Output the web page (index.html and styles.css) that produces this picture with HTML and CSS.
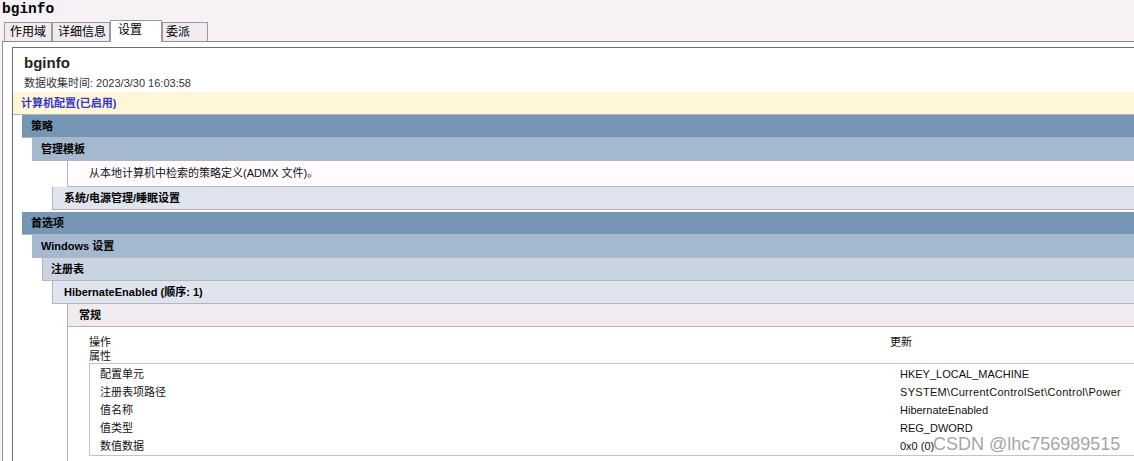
FILE: index.html
```html
<!DOCTYPE html>
<html lang="zh-CN">
<head>
<meta charset="utf-8">
<title>bginfo</title>
<link rel="stylesheet" href="styles.css">
</head>
<body>
<div class="page">
  <div class="apptitle">bginfo</div>
  <div class="tabs">
    <div class="tab t1">作用域</div>
    <div class="tab t2">详细信息</div>
    <div class="tab t3 active">设置</div>
    <div class="tab t4">委派</div>
  </div>
  <div class="tabpanel">
    <div class="report">
      <div class="rhead">
        <div class="rtitle">bginfo</div>
        <div class="rtime">数据收集时间: 2023/3/30 16:03:58</div>
      </div>
      <div class="cat">计算机配置(已启用)</div>

      <div class="sec i1">
        <div class="bar b1">策略</div>
        <div class="sec i2">
          <div class="bar b2">管理模板</div>
          <div class="desc">从本地计算机中检索的策略定义(ADMX 文件)。</div>
          <div class="sec i4">
            <div class="bar b4">系统/电源管理/睡眠设置</div>
          </div>
        </div>
      </div>

      <div class="sec i1 pref">
        <div class="bar b1">首选项</div>
        <div class="sec i2">
          <div class="bar b2">Windows 设置</div>
          <div class="sec i2">
            <div class="bar b3">注册表</div>
            <div class="sec i2">
              <div class="bar b4">HibernateEnabled (顺序: 1)</div>
              <div class="sec i5">
                <div class="bar b5">常规</div>
                <div class="details">
                  <div class="kv"><span>操作</span><span>更新</span></div>
                  <div class="ptitle">属性</div>
                  <div class="props">
                    <div class="prow"><span>配置单元</span><span>HKEY_LOCAL_MACHINE</span></div>
                    <div class="prow"><span>注册表项路径</span><span class="wide">SYSTEM\CurrentControlSet\Control\Power</span></div>
                    <div class="prow"><span>值名称</span><span>HibernateEnabled</span></div>
                    <div class="prow"><span>值类型</span><span>REG_DWORD</span></div>
                    <div class="prow"><span>数值数据</span><span>0x0 (0)</span></div>
                  </div>
                </div>
              </div>
            </div>
          </div>
        </div>
      </div>
    </div>
  </div>
  <div class="wm">CSDN @lhc756989515</div>
</div>
</body>
</html>
```

FILE: styles.css
```css
html, body {
  margin: 0;
  padding: 0;
}
body {
  background: #f5f1f5;
  font-family: "Liberation Sans", "Noto Sans CJK SC", sans-serif;
  font-size: 11px;
  color: #111;
  overflow: hidden;
}
.page {
  position: relative;
  height: 461px;
  display: flex;
  flex-direction: column;
}
.apptitle {
  font-family: "Liberation Mono", monospace;
  font-weight: bold;
  font-size: 14.5px;
  line-height: 19px;
  height: 20px;
  padding-left: 2px;
  color: #000;
}
.tabs {
  position: relative;
  z-index: 1;
  display: flex;
  align-items: flex-end;
  height: 21px;
  padding-left: 4px;
  font-size: 12px;
  color: #000;
}
.tab {
  box-sizing: border-box;
  height: 19px;
  line-height: 18px;
  border: 1px solid #9a9a9a;
  border-bottom: none;
  background: #efebef;
  white-space: nowrap;
}
.t1 { padding: 0 5px; }
.t2 { padding: 0 3px 0 5px; }
.t3 { padding: 0 19px 0 7px; }
.t4 { padding: 0 17px 0 3px; }
.tab.active {
  height: 22px;
  margin-bottom: -1px;
  line-height: 18px;
  background: #fff;
}
.tabpanel {
  flex: 1;
  min-height: 0;
  margin-left: 2px;
  border-top: 1px solid #8e8e8e;
  border-left: 1px solid #8e8e8e;
  background: #fff;
  padding: 5px 0 0 9px;
  display: flex;
  flex-direction: column;
}
.report {
  flex: 1;
  border-top: 1px solid #6e6e6e;
  border-left: 1px solid #6e6e6e;
  background: #fff;
}
.rhead {
  padding-left: 11px;
}
.rtitle {
  margin-top: 6px;
  font-size: 15px;
  line-height: 18px;
  font-weight: bold;
  color: #222;
}
.rtime {
  margin-top: 4px;
  line-height: 14px;
  color: #333;
}
.cat {
  margin-top: 2px;
  background: #fff6d7;
  color: #3636c8;
  font-weight: bold;
  line-height: 22px;
  padding-left: 8px;
  border-bottom: 1px solid #b4b4bc;
}
.i1 { margin-left: 9px; }
.i2 { margin-left: 10px; }
.i4 { margin-left: 20px; }
.i5 { margin-left: 15px; }
.pref { margin-top: 2px; }
.bar {
  line-height: 22px;
  font-weight: bold;
  color: #000;
  white-space: nowrap;
  border-bottom: 1px solid #b4b4bc;
}
.b1 {
  background: #7497b5;
  padding-left: 9px;
}
.b2 {
  background: #a4b9cf;
  padding-left: 9px;
}
.b3 {
  background: #c8d4e0;
  padding-left: 8px;
  border-left: 1px solid #b4b4bc;
}
.b4 {
  background: #dfe4ef;
  padding-left: 11px;
  border-left: 1px solid #b4b4bc;
}
.b5 {
  background: #efebee;
  padding-left: 11px;
  border-left: 1px solid #b4b4bc;
}
.desc {
  margin-left: 35px;
  background: #fffbff;
  line-height: 25px;
  padding-left: 21px;
  border-left: 1px solid #b4b4bc;
  border-bottom: 1px solid #b4b4bc;
  color: #111;
}
.details {
  border-left: 1px solid #b4b4bc;
  padding: 8px 0 10px 21px;
  line-height: 14px;
}
.kv {
  display: grid;
  grid-template-columns: 801px 1fr;
}
.props {
  border: 1px solid #c4c4c4;
  border-right: none;
  padding: 1px 0 0 10px;
}
.prow {
  display: grid;
  grid-template-columns: 800px 1fr;
  line-height: 18px;
  white-space: nowrap;
}
.wide {
  letter-spacing: 0.3px;
}
.wm {
  position: absolute;
  left: 933px;
  top: 434px;
  font-family: "Liberation Sans", sans-serif;
  font-size: 18px;
  line-height: 20px;
  color: rgba(140, 140, 140, 0.8);
  white-space: nowrap;
}
```
